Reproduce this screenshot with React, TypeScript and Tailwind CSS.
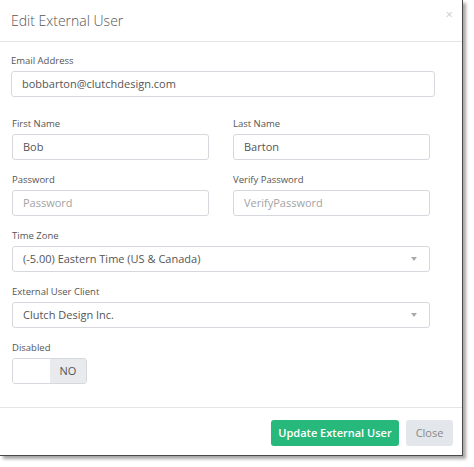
import React from 'react';

const FONT = "font-['Open_Sans',_'Liberation_Sans',_sans-serif]";

function Label({ children }: { children: React.ReactNode }) {
  return <div className="h-[14px] text-[9.5px] leading-[14px] text-[#555]">{children}</div>;
}

function Field({
  label,
  value,
  placeholder,
  className = '',
}: {
  label: string;
  value?: string;
  placeholder?: string;
  className?: string;
}) {
  return (
    <div className={className}>
      <Label>{label}</Label>
      <div className="mt-[3px] flex h-[26px] items-center rounded-[3px] border border-[#d5d8dc] px-[10px] text-[11px]">
        {value ? (
          <span className="text-[#555]">{value}</span>
        ) : (
          <span className="text-[#a3a3a3]">{placeholder}</span>
        )}
      </div>
    </div>
  );
}

function Select({ label, value }: { label: string; value: string }) {
  return (
    <div className="mt-[13px]">
      <Label>{label}</Label>
      <div className="mt-[3px] flex h-[26px] items-center justify-between rounded-[3px] border border-[#d5d8dc] pl-[10px] pr-[12px] text-[11px] text-[#555]">
        <span>{value}</span>
        {/* caret */}
        <span className="h-0 w-0 border-x-[3px] border-t-[4px] border-x-transparent border-t-[#aaa]" />
      </div>
    </div>
  );
}

export default function App() {
  return (
    <div className={`h-[467px] w-[474px] bg-white ${FONT}`}>
      <div className="flex h-[456px] w-[463px] flex-col border-b border-r border-[#4a4a4a] bg-white shadow-[3px_3px_3px_rgba(0,0,0,0.35)]">
        {/* Header */}
        <div className="relative flex h-[42px] items-center border-b border-[#e5e5e5] pl-[11px]">
          <span className="text-[14px] font-light text-[#555]">Edit External User</span>
          <span className="absolute right-[9px] top-[5px] text-[13px] text-[#cfcfcf]">×</span>
        </div>

        {/* Body */}
        <div className="flex-1 pl-[12px] pr-[32px] pt-[12px]">
          <div className="-ml-[1px] w-[424px]">
            <Label>Email Address</Label>
            <div className="mt-[3px] flex h-[26px] items-center rounded-[3px] border border-[#d5d8dc] px-[10px] text-[11px] text-[#555]">
              bobbarton@clutchdesign.com
            </div>
          </div>

          <div className="mt-[20px] grid w-[418px] grid-cols-2 gap-x-[24px]">
            <Field label="First Name" value="Bob" />
            <Field label="Last Name" value="Barton" />
            <Field label="Password" placeholder="Password" className="mt-[13px]" />
            <Field label="Verify Password" placeholder="VerifyPassword" className="mt-[13px]" />
          </div>

          <div className="w-[418px]">
            <Select label="Time Zone" value="(-5.00) Eastern Time (US & Canada)" />
            <Select label="External User Client" value="Clutch Design Inc." />
          </div>

          <div className="mt-[13px]">
            <Label>Disabled</Label>
            <div className="mt-[3px] flex h-[26px] w-[75px] overflow-hidden rounded-[3px] border border-[#d5d8dc]">
              <div className="w-[37px] bg-white" />
              <div className="flex flex-1 items-center justify-center bg-[#e8eaed] text-[11px] text-[#555]">
                NO
              </div>
            </div>
          </div>
        </div>

        {/* Footer */}
        <div className="flex h-[48px] justify-end gap-[7px] border-t border-[#e5e5e5] pr-[9px] pt-[12px]">
          <button className="h-[26px] w-[128px] rounded-[3px] bg-[#27b87c] text-[11px] font-semibold text-white">
            Update External User
          </button>
          <button className="h-[26px] w-[47px] rounded-[3px] bg-[#e3e6ea] text-[11px] text-[#888]">
            Close
          </button>
        </div>
      </div>
    </div>
  );
}
